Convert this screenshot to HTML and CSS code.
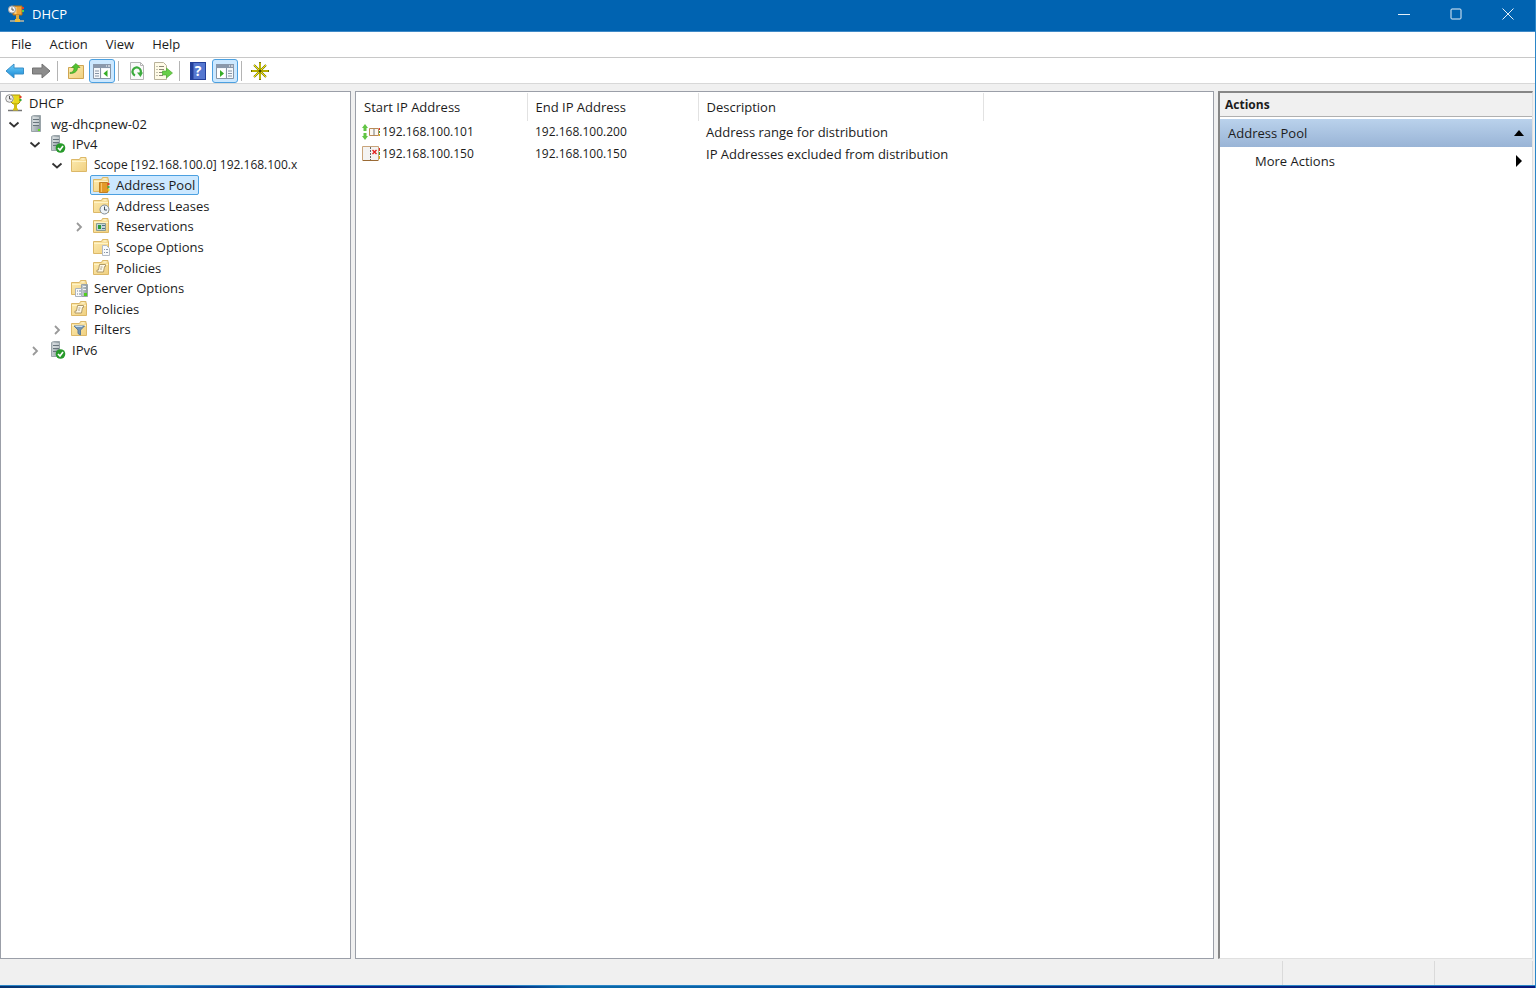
FILE: index.html
```html
<!DOCTYPE html>
<html lang="en">
<head>
  <meta charset="utf-8">
  <title>DHCP</title>
  <link rel="stylesheet" href="styles.css">
</head>
<body>
  <!-- shared icon shapes -->
  <svg class="sprite" aria-hidden="true">
    <defs>
      <linearGradient id="gold" x1="0" y1="0" x2="1" y2="1">
        <stop offset="0" stop-color="#fdebb0"/>
        <stop offset="1" stop-color="#f0d080"/>
      </linearGradient>
      <linearGradient id="blue" x1="0" y1="0" x2="0" y2="1">
        <stop offset="0" stop-color="#6fd0fb"/>
        <stop offset="1" stop-color="#1585d3"/>
      </linearGradient>
      <linearGradient id="steel" x1="0" y1="0" x2="1" y2="0">
        <stop offset="0" stop-color="#c9d0d3"/>
        <stop offset="1" stop-color="#8a969c"/>
      </linearGradient>
      <symbol id="folder" viewBox="0 0 18 18">
        <path d="M1.500 3.500h8l1-2h5.500v2h.5v12h-15z" fill="url(#gold)" stroke="#dcb868"/>
        <path d="M11.500 3h3" stroke="#fff8dc"/>
        <path d="M2 5.500h14" stroke="#fff3c6"/>
      </symbol>
      <symbol id="server" viewBox="0 0 18 18">
        <path d="M4.500 1.500l2-1h7v16h-9z" fill="url(#steel)" stroke="#9aa4a9"/>
        <path d="M6 4.500h6M6 7.500h6M6 10.500h6" stroke="#67747c"/>
        <path d="M6 3h6M6 6h6M6 9h6" stroke="#eef2f3"/>
        <path d="M11 14h2v2h-2z" fill="#5fe01c"/>
      </symbol>
      <symbol id="server-ok" viewBox="0 0 18 18">
        <path d="M3.500 1.500l2-1h6v15h-8z" fill="url(#steel)" stroke="#9aa4a9"/>
        <path d="M5 4.500h6M5 7.500h6M5 10.500h4" stroke="#67747c"/>
        <path d="M5 3h6M5 6h6" stroke="#eef2f3"/>
        <circle cx="12.500" cy="13" r="4.800" fill="#279a2a"/>
        <path d="M10 13l2 2 3-4" fill="none" stroke="#fff" stroke-width="1.600"/>
      </symbol>
      <symbol id="trophy" viewBox="0 0 18 18">
        <path d="M6 1h9v7l-2 2h-5l-2-2z" fill="#e8d81c" stroke="#a99608"/>
        <path d="M7.500 2v6" stroke="#fff773" stroke-width="2"/>
        <path d="M15.500 2v2" stroke="#e43b2a" stroke-width="2"/>
        <path d="M15.500 5v2" stroke="#38a838" stroke-width="2"/>
        <path d="M9 10h3v5h-3z" fill="#d2bd13"/>
        <path d="M3 16.500h14" stroke="#767676" stroke-width="1.500"/>
        <path d="M8 14.500h5v2h-5z" fill="#d8c31a"/>
        <circle cx="4.500" cy="4.500" r="3.800" fill="#eee" stroke="#8d8d8d"/>
        <path d="M4.500 2v3h2" fill="none" stroke="#555"/>
      </symbol>
      <symbol id="trophy-title" viewBox="0 0 18 18">
        <path d="M5 1h9v9h-9z" fill="#eda43a" stroke="#ad6e17"/>
        <path d="M7.500 2v7" stroke="#ffd27d" stroke-width="2"/>
        <path d="M15 2v2" stroke="#e43b2a" stroke-width="2"/>
        <path d="M15 5v2" stroke="#4fcf4f" stroke-width="2"/>
        <path d="M8 10h3v5h-3z" fill="#d8a83e"/>
        <path d="M2 16h14" stroke="#c0b9a0" stroke-width="1.500"/>
        <path d="M7 14h5v3h-5z" fill="#edba3b"/>
        <circle cx="4" cy="4.500" r="3.600" fill="#f5f5f5" stroke="#9a9a9a"/>
        <path d="M4 2.500v2.500h2" fill="none" stroke="#555"/>
      </symbol>
      <symbol id="pool" viewBox="0 0 18 18">
        <use href="#folder"/>
        <path d="M7.500 6.500h8v10h-8z" fill="#e39a28" stroke="#c08024"/>
        <path d="M9.500 7v9" stroke="#f5c36c"/>
        <path d="M16.500 7v2" stroke="#e43b2a" stroke-width="2"/>
        <path d="M16.500 10v2" stroke="#4ab04a" stroke-width="2"/>
        <path d="M16.500 13v2" stroke="#e8d024" stroke-width="2"/>
      </symbol>
      <symbol id="leases" viewBox="0 0 18 18">
        <use href="#folder"/>
        <circle cx="12.500" cy="12.500" r="4.500" fill="#eef3f7" stroke="#7f8b95"/>
        <path d="M12.500 9.500v3.500h2.500" fill="none" stroke="#46515b"/>
      </symbol>
      <symbol id="reservations" viewBox="0 0 18 18">
        <use href="#folder"/>
        <path d="M4.500 6.500h9v7h-9z" fill="#c4d5d8" stroke="#8a9b93"/>
        <path d="M6 8h3v4h-3z" fill="#2c9e39"/>
        <path d="M10 8.500h3M10 11.500h3" stroke="#4f7088"/>
      </symbol>
      <symbol id="scope-options" viewBox="0 0 18 18">
        <use href="#folder"/>
        <path d="M10.500 7.500h4l3 3v7h-7z" fill="#f8fafc" stroke="#b4bbc6"/>
        <path d="M12 11.500h1M14 11.500h2M12 14.500h1M14 14.500h2" stroke="#8b97aa"/>
      </symbol>
      <symbol id="policies" viewBox="0 0 18 18">
        <use href="#folder"/>
        <path d="M7.500 5.500h6v2h-1l-1 5.500h-6.500v-2h1.500z" fill="#fffaea" stroke="#b09a68"/>
        <path d="M8.500 8h2M8 10h2" stroke="#aaa08a"/>
      </symbol>
      <symbol id="server-options" viewBox="0 0 18 18">
        <use href="#folder"/>
        <path d="M11.500 5.500h6v12h-6z" fill="url(#steel)" stroke="#9aa4a9"/>
        <path d="M13 7.500h3M13 10.500h3" stroke="#eef2f3"/>
        <path d="M14 14h3v3h-3z" fill="#4fcf1c"/>
        <path d="M5.500 9.500h6v8h-6z" fill="#f8fafc" stroke="#aab3be"/>
        <path d="M7 12h1M9 12h2M7 15h1M9 15h2" stroke="#75839a"/>
      </symbol>
      <symbol id="filters" viewBox="0 0 18 18">
        <use href="#folder"/>
        <path d="M4 6h10.500l-4 4v5l-2.500-1.500v-3.500z" fill="#7194b4" stroke="#5c7b98"/>
        <path d="M5.500 6.500h7" stroke="#c5ddf0"/>
      </symbol>
      <symbol id="down" viewBox="0 0 12 12">
        <path d="M1.500 4.500l4.500 4 4.500-4" fill="none" stroke="#333" stroke-width="1.800"/>
      </symbol>
      <symbol id="right" viewBox="0 0 12 12">
        <path d="M4 3l4 4-4 4" fill="none" stroke="#999" stroke-width="1.800"/>
      </symbol>
    </defs>
  </svg>

  <header class="titlebar">
    <svg class="icon"><use href="#trophy-title"/></svg>
    <h1>DHCP</h1>
    <div class="window-buttons">
      <button type="button" aria-label="Minimize"><svg viewBox="0 0 12 12"><path d="M0 6.500h12"/></svg></button>
      <button type="button" aria-label="Maximize"><svg viewBox="0 0 12 12"><rect x="1" y="1" width="10" height="10" rx="1"/></svg></button>
      <button type="button" aria-label="Close"><svg viewBox="0 0 12 12"><path d="M.5.5l11 11M11.500.5l-11 11"/></svg></button>
    </div>
  </header>

  <nav class="menubar">
    <button type="button">File</button>
    <button type="button">Action</button>
    <button type="button">View</button>
    <button type="button">Help</button>
  </nav>

  <div class="toolbar">
    <button type="button" aria-label="Back">
      <svg viewBox="0 0 20 18"><path d="M1 9l8-7v4h9.500v6h-9.500v4z" fill="url(#blue)" stroke="#3a8fc7"/></svg>
    </button>
    <button type="button" aria-label="Forward">
      <svg viewBox="0 0 20 18"><path d="M19 9l-8-7v4h-9.500v6h9.500v4z" fill="#8c8c8c" stroke="#727272"/></svg>
    </button>
    <span class="divider"></span>
    <button type="button" aria-label="Up one level">
      <svg viewBox="0 0 20 18"><path d="M2.500 5.500h8l1-2h6v13h-15z" fill="url(#gold)" stroke="#cfa552"/><path d="M4 10.500c3 0 4-2 4-5h-2.500l4.500-4 4 4h-2.500c0 4-3 6-7.500 6z" fill="#52c32f" stroke="#3a9420" stroke-width=".6"/></svg>
    </button>
    <button type="button" class="pressed" aria-label="Show or hide console tree">
      <svg viewBox="0 0 20 18"><path d="M1.500 2.500h17v14h-17z" fill="#f4f7fa" stroke="#8795a6"/><path d="M1 2h18v4h-18z" fill="#8a98ab"/><path d="M14 4h1M16 4h2" stroke="#fff"/><path d="M3 9h4M3 11.500h4M3 14h4" stroke="#8795a6"/><path d="M8.500 6v10" stroke="#8795a6"/><path d="M10 7h8v9h-8z" fill="#fff"/><path d="M15.500 8v7l-4-3.500z" fill="#36ad26"/></svg>
    </button>
    <span class="divider"></span>
    <button type="button" aria-label="Refresh">
      <svg viewBox="0 0 20 18"><path d="M3.500.5h10l3 3v14h-13z" fill="#fafafa" stroke="#b5b5b5"/><path d="M13.500.5v3h3" fill="none" stroke="#b5b5b5"/><path d="M8 13.500a4.200 4.200 0 1 1 5.500-2" fill="none" stroke="#3bab3c" stroke-width="2.200"/><path d="M10 10.500h6l-2.500 4.500z" fill="#3bab3c"/></svg>
    </button>
    <button type="button" aria-label="Export list">
      <svg viewBox="0 0 20 18"><path d="M1.500.5h9l3 3v14h-12z" fill="#fffbe7" stroke="#b8b29a"/><path d="M3.500 4.500h1M3.500 7.500h1M3.500 10.500h1M3.500 13.500h1M6 4.500h5M6 7.500h5M6 10.500h4M6 13.500h4" stroke="#8b8877"/><path d="M9.500 9h4v-3l6 5-6 5v-3h-4z" fill="#69cf48" stroke="#48a42e" stroke-width=".6"/></svg>
    </button>
    <span class="divider"></span>
    <button type="button" class="help" aria-label="Help">?</button>
    <button type="button" class="pressed" aria-label="Show or hide action pane">
      <svg viewBox="0 0 20 18"><path d="M1.500 2.500h17v14h-17z" fill="#f4f7fa" stroke="#8795a6"/><path d="M1 2h18v4h-18z" fill="#8a98ab"/><path d="M14 4h1M16 4h2" stroke="#fff"/><path d="M13 9h4M13 11.500h4M13 14h4" stroke="#8795a6"/><path d="M11.500 6v10" stroke="#8795a6"/><path d="M2 7h8v9h-8z" fill="#fff"/><path d="M5 8v7l4-3.500z" fill="#36ad26"/></svg>
    </button>
    <span class="divider"></span>
    <button type="button" aria-label="New">
      <svg viewBox="0 0 20 18"><path d="M10 0v18M1 9h18M4 3l12 12M16 3L4 15" stroke="#6b6a00" stroke-width="1.800"/><path d="M10 1v16M2 9h16M4 3l12 12M16 3L4 15" stroke="#fff200" stroke-width="1"/><circle cx="10" cy="9" r="1.500" fill="#4a4900"/></svg>
    </button>
  </div>

  <main class="workspace">
    <section class="pane">
      <ul class="tree">
        <li class="level-0"><button type="button" class="node"><svg class="icon"><use href="#trophy"/></svg>DHCP</button></li>
        <li class="level-1"><button type="button" class="toggle" aria-label="Collapse"><svg><use href="#down"/></svg></button><button type="button" class="node"><svg class="icon"><use href="#server"/></svg>wg-dhcpnew-02</button></li>
        <li class="level-2"><button type="button" class="toggle" aria-label="Collapse"><svg><use href="#down"/></svg></button><button type="button" class="node"><svg class="icon"><use href="#server-ok"/></svg>IPv4</button></li>
        <li class="level-3"><button type="button" class="toggle" aria-label="Collapse"><svg><use href="#down"/></svg></button><button type="button" class="node address"><svg class="icon"><use href="#folder"/></svg>Scope [192.168.100.0] 192.168.100.x</button></li>
        <li class="level-4"><span class="toggle"></span><button type="button" class="node selected"><svg class="icon"><use href="#pool"/></svg>Address Pool</button></li>
        <li class="level-4"><span class="toggle"></span><button type="button" class="node"><svg class="icon"><use href="#leases"/></svg>Address Leases</button></li>
        <li class="level-4"><button type="button" class="toggle" aria-label="Expand"><svg><use href="#right"/></svg></button><button type="button" class="node"><svg class="icon"><use href="#reservations"/></svg>Reservations</button></li>
        <li class="level-4"><span class="toggle"></span><button type="button" class="node"><svg class="icon"><use href="#scope-options"/></svg>Scope Options</button></li>
        <li class="level-4"><span class="toggle"></span><button type="button" class="node"><svg class="icon"><use href="#policies"/></svg>Policies</button></li>
        <li class="level-3"><span class="toggle"></span><button type="button" class="node"><svg class="icon"><use href="#server-options"/></svg>Server Options</button></li>
        <li class="level-3"><span class="toggle"></span><button type="button" class="node"><svg class="icon"><use href="#policies"/></svg>Policies</button></li>
        <li class="level-3"><button type="button" class="toggle" aria-label="Expand"><svg><use href="#right"/></svg></button><button type="button" class="node"><svg class="icon"><use href="#filters"/></svg>Filters</button></li>
        <li class="level-2"><button type="button" class="toggle" aria-label="Expand"><svg><use href="#right"/></svg></button><button type="button" class="node"><svg class="icon"><use href="#server-ok"/></svg>IPv6</button></li>
      </ul>
    </section>

    <section class="pane">
      <table>
        <thead>
          <tr>
            <th class="col-ip">Start IP Address</th>
            <th class="col-ip">End IP Address</th>
            <th class="col-desc">Description</th>
            <th class="col-rest"></th>
          </tr>
        </thead>
        <tbody>
          <tr>
            <td class="address with-icon">
              <svg class="icon" viewBox="0 0 18 18"><path d="M3 1l3 4h-1.500v3h-3v-3h-1.500zM3 17l3-4h-1.500v-3h-3v3h-1.500z" fill="#62c544"/><path d="M7.500 5.500h9v7h-9z" fill="#fbf8f2" stroke="#b98a57"/><path d="M12 6v6" stroke="#777"/><path d="M17.500 5v2" stroke="#d33"/><path d="M17.500 8v2" stroke="#3a9a3a"/><path d="M17.500 11v2" stroke="#d8b01a"/></svg>
              192.168.100.101
            </td>
            <td class="address">192.168.100.200</td>
            <td>Address range for distribution</td>
            <td></td>
          </tr>
          <tr>
            <td class="address with-icon">
              <svg class="icon" viewBox="0 0 18 18"><path d="M.5 1.500h16v14h-16z" fill="#f4f3f2" stroke="#c9a47a"/><path d="M8.500 2v13" stroke="#666" stroke-dasharray="2 1"/><path d="M1 15.500h15" stroke="#9a6a35"/><path d="M10.500 5l4 4M14.500 5l-4 4" stroke="#e02020" stroke-width="1.400"/><path d="M17.500 3v3" stroke="#d33"/><path d="M17.500 7v3" stroke="#3a9a3a"/><path d="M17.500 11v3" stroke="#d8b01a"/></svg>
              192.168.100.150
            </td>
            <td class="address">192.168.100.150</td>
            <td>IP Addresses excluded from distribution</td>
            <td></td>
          </tr>
        </tbody>
      </table>
    </section>

    <aside class="actions">
      <h2>Actions</h2>
      <button type="button" class="group">Address Pool<svg viewBox="0 0 12 12"><path d="M1 9l5-6 5 6z"/></svg></button>
      <button type="button" class="more">More Actions<svg viewBox="0 0 12 12"><path d="M3 0l6 6-6 6z"/></svg></button>
    </aside>
  </main>

  <footer class="statusbar">
    <span class="status-main"></span>
    <span class="status-mid"></span>
    <span class="status-end"></span>
  </footer>
  <div class="desktop-edge"></div>
</body>
</html>
```
FILE: styles.css
```css
* {
  box-sizing: border-box;
}

body {
  margin: 0;
  min-height: 100vh;
  display: flex;
  flex-direction: column;
  background-color: #f0f0f0;
  border-right: 1px solid #2b86c8;
  color: #1c1c1c;
  font-family: "Open Sans", "Noto Sans", sans-serif;
  font-size: 13px;
  line-height: 16px;
}

button {
  margin: 0;
  padding: 0;
  border: none;
  background: none;
  color: inherit;
  font: inherit;
}

svg {
  display: block;
}

.sprite {
  position: absolute;
  width: 0;
  height: 0;
}

.icon {
  width: 18px;
  height: 18px;
  flex: none;
}

/* title bar */
.titlebar {
  display: flex;
  align-items: center;
  height: 32px;
  padding: 0 1px 4px 8px;
  background-color: #0063b1;
  border-bottom: 1px solid #3f8ac8;
  color: #ffffff;
}

.titlebar h1 {
  margin: 0 auto 0 6px;
  font-size: 13px;
  font-weight: normal;
}

.window-buttons {
  display: flex;
}

.window-buttons button {
  display: flex;
  align-items: center;
  justify-content: center;
  width: 52px;
  height: 27px;
}

.window-buttons svg {
  width: 12px;
  height: 12px;
  fill: none;
  stroke: #e4eff8;
}

/* menu */
.menubar {
  display: flex;
  align-items: center;
  gap: 18px;
  height: 26px;
  padding: 0 11px 2px;
  background-color: #ffffff;
  border-bottom: 1px solid #c8c8c8;
}

/* toolbar */
.toolbar {
  display: flex;
  align-items: center;
  height: 26px;
  padding: 1px 0 0 2px;
  background-color: #ffffff;
  border-bottom: 1px solid #d8d8d8;
}

.toolbar button {
  display: flex;
  align-items: center;
  justify-content: center;
  width: 26px;
  height: 24px;
  border: 1px solid transparent;
  border-radius: 3px;
}

.toolbar svg {
  width: 20px;
  height: 18px;
}

.toolbar .pressed {
  background-color: #cce8ff;
  border-color: #4ca0e0;
}

.toolbar .help {
  width: 16px;
  height: 18px;
  margin: 0 6px 0 5px;
  border: 1px solid #24409a;
  border-radius: 0;
  background: linear-gradient(90deg, #24409a 2px, #5577d0 3px);
  color: #ffffff;
  font-size: 14px;
  font-weight: bold;
}

.divider {
  width: 1px;
  height: 20px;
  margin: 0 5px 0 3px;
  background-color: #b4b4b4;
}

/* three panes */
.workspace {
  flex: 1;
  display: grid;
  grid-template-columns: 351px 1fr 315px;
  gap: 4px;
  margin: 7px 2px 0 0;
}

.pane {
  padding-top: 1px;
  background-color: #ffffff;
  border: 1px solid #9b9fa8;
}

.tree {
  display: grid;
  grid-auto-rows: 1fr;
  height: 267px;
  margin: 0;
  padding: 0;
  list-style: none;
}

.tree li {
  display: flex;
  align-items: center;
}

.toggle {
  width: 22px;
  flex: none;
}

.toggle svg {
  width: 12px;
  height: 12px;
  margin-left: 5px;
}

.node {
  display: flex;
  align-items: center;
  gap: 6px;
  height: 20px;
  padding: 0 3px 0 1px;
  border: 1px solid transparent;
  border-radius: 2px;
  white-space: nowrap;
}

.node.selected {
  background-color: #cce8ff;
  border-color: #4ca0e0;
}

/* rows made mostly of digits */
.address {
  font-size: 12px;
}

.level-0 { padding-left: 2px; }
.level-1 { padding-left: 2px; }
.level-2 { padding-left: 23px; }
.level-3 { padding-left: 45px; }
.level-4 { padding-left: 67px; }

/* address list */
table {
  width: 100%;
  border-collapse: collapse;
  table-layout: fixed;
}

th,
td {
  padding: 0 8px;
  text-align: left;
  font-weight: normal;
  white-space: nowrap;
}

th {
  height: 28px;
  border-right: 1px solid #e2e2e2;
}

th:last-child {
  border-right: none;
}

td {
  height: 22px;
}

.col-ip {
  width: 171px;
}

.col-desc {
  width: 285px;
}

.with-icon {
  display: flex;
  align-items: center;
  gap: 2px;
  padding-left: 6px;
}

/* actions pane */
.actions {
  background-color: #ffffff;
  border: 1px solid #e0e0e0;
  border-top: 2px solid #868686;
  border-left: 2px solid #868686;
}

.actions h2 {
  height: 24px;
  margin: 0 0 2px;
  padding: 4px 5px;
  background-color: #f0f0f0;
  border-bottom: 1px solid #b0b0b0;
  font-size: 12px;
  line-height: 16px;
}

.actions button {
  display: flex;
  align-items: center;
  justify-content: space-between;
  width: 100%;
  height: 28px;
  padding: 0 7px 0 8px;
}

.actions .group {
  background: linear-gradient(#bad2ec, #99b4d6);
}

.actions .more {
  padding-left: 35px;
}

.actions svg {
  width: 12px;
  height: 12px;
  fill: #000000;
}

/* status bar */
.statusbar {
  display: flex;
  height: 26px;
  margin-right: 2px;
  padding-top: 2px;
}

.statusbar span {
  border-right: 1px solid #dadada;
}

.status-main {
  flex: 1;
}

.status-mid {
  width: 152px;
}

.status-end {
  width: 98px;
}

.desktop-edge {
  height: 3px;
  background: linear-gradient(90deg, #06326f 0%, #1268a8 10%, #0a1f8c 20%, #062a80 33%, #0a6aa8 37%, #0b5aa5 55%, #06327f 66%, #08187c 100%);
  border-top: 1px solid #2b86c8;
}
```
